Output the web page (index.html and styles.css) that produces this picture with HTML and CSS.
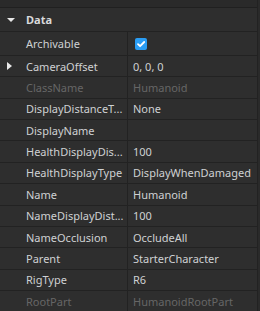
FILE: index.html
```html
<!DOCTYPE html>
<html>
<head>
<meta charset="utf-8">
<link rel="stylesheet" href="styles.css">
</head>
<body>
<div class="frame">
  <div class="panel">
    <div class="topbar"></div>
    <div class="header">
      <span class="caret-down"></span>
      <span class="header-title">Data</span>
    </div>
    <div class="rows">
      <div class="row tall">
        <div class="name">Archivable</div>
        <div class="value"><span class="checkbox"><svg width="12" height="12" viewBox="0 0 12 12"><path d="M3 6.2 L5.1 8.2 L9.2 4" fill="none" stroke="#fff" stroke-width="1.8" stroke-linecap="round" stroke-linejoin="round"/></svg></span></div>
      </div>
      <div class="row">
        <div class="name"><span class="caret-right"></span>CameraOffset</div>
        <div class="value">0, 0, 0</div>
      </div>
      <div class="row disabled">
        <div class="name">ClassName</div>
        <div class="value">Humanoid</div>
      </div>
      <div class="row">
        <div class="name">DisplayDistanceT...</div>
        <div class="value">None</div>
      </div>
      <div class="row">
        <div class="name">DisplayName</div>
        <div class="value"></div>
      </div>
      <div class="row">
        <div class="name">HealthDisplayDis...</div>
        <div class="value">100</div>
      </div>
      <div class="row">
        <div class="name">HealthDisplayType</div>
        <div class="value">DisplayWhenDamaged</div>
      </div>
      <div class="row">
        <div class="name">Name</div>
        <div class="value">Humanoid</div>
      </div>
      <div class="row">
        <div class="name">NameDisplayDist...</div>
        <div class="value">100</div>
      </div>
      <div class="row">
        <div class="name">NameOcclusion</div>
        <div class="value">OccludeAll</div>
      </div>
      <div class="row">
        <div class="name">Parent</div>
        <div class="value">StarterCharacter</div>
      </div>
      <div class="row">
        <div class="name">RigType</div>
        <div class="value">R6</div>
      </div>
      <div class="row disabled">
        <div class="name">RootPart</div>
        <div class="value">HumanoidRootPart</div>
      </div>
    </div>
  </div>
  <div class="scrollbar"></div>
</div>
</body>
</html>
```
FILE: styles.css
```css
html, body {
  margin: 0;
  padding: 0;
  background: #2e2e2e;
  width: 260px;
  height: 311px;
  overflow: hidden;
}
.frame {
  display: flex;
  width: 260px;
  height: 311px;
  font-family: "Noto Sans", "Open Sans", sans-serif;
  font-size: 11px;
  color: #cfd1d3;
}
.panel {
  width: 257px;
  border-right: 1px solid #222222;
  display: flex;
  flex-direction: column;
}
.scrollbar {
  flex: 1;
  background: #2a2a2a;
}
.topbar {
  height: 7px;
  background: #2a2a2a;
  border-bottom: 1px solid #202020;
  flex: none;
}
.header {
  height: 23px;
  flex: none;
  display: flex;
  align-items: center;
  border-bottom: 1px solid #222222;
  background: #2e2e2e;
}
.caret-down {
  width: 0;
  height: 0;
  margin-left: 7px;
  border-left: 4px solid transparent;
  border-right: 4px solid transparent;
  border-top: 4px solid #e8e8e8;
}
.header-title {
  margin-left: 11px;
  font-weight: bold;
  color: #d8dadc;
}
.rows {
  display: flex;
  flex-direction: column;
}
.row {
  display: grid;
  grid-template-columns: 128px 1fr;
  height: 20.36px;
  border-bottom: 1px solid #222222;
  flex: none;
}
.row.tall {
  height: 23px;
}
.name {
  display: flex;
  align-items: center;
  padding-left: 26px;
  border-right: 1px solid #222222;
  position: relative;
  white-space: nowrap;
  overflow: hidden;
}
.value {
  display: flex;
  align-items: center;
  padding-left: 5px;
  white-space: nowrap;
  overflow: hidden;
}
.disabled .name, .disabled .value {
  color: #666666;
}
.caret-right {
  position: absolute;
  left: 7px;
  top: 50%;
  margin-top: -4px;
  width: 0;
  height: 0;
  border-top: 4px solid transparent;
  border-bottom: 4px solid transparent;
  border-left: 5px solid #e8e8e8;
}
.checkbox {
  display: inline-flex;
  width: 12px;
  height: 12px;
  margin-left: 2px;
  border-radius: 2px;
  background: #2a9df4;
}
```
